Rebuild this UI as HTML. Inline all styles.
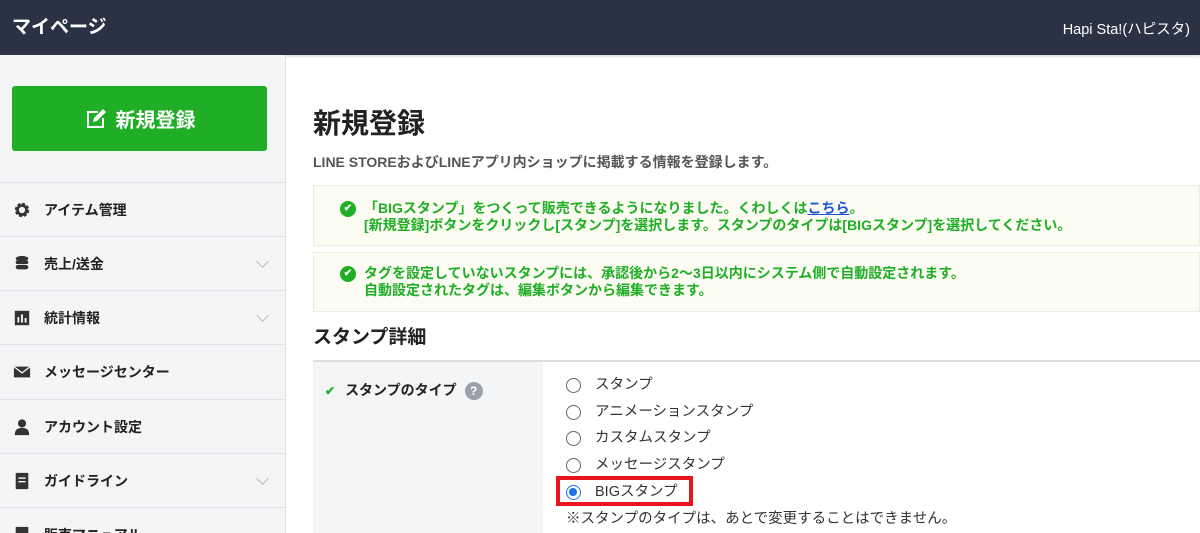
<!DOCTYPE html>
<html><head><meta charset="utf-8"><style>
*{margin:0;padding:0;box-sizing:border-box}
html,body{width:1200px;height:533px;overflow:hidden}
body{background:#fff;font-family:"Liberation Sans","Noto Sans CJK JP",sans-serif;color:#222;position:relative}
.hdr{position:absolute;left:0;top:0;width:1200px;height:55px;background:#2a3346;color:#fff;box-shadow:0 2px 2px rgba(0,0,0,.12)}
.hdr .t{position:absolute;left:12px;top:12px;font-size:19px;font-weight:bold}
.hdr .u{position:absolute;right:10px;top:18px;font-size:14.5px}
.side{position:absolute;left:0;top:55px;width:286px;height:478px;background:#f4f5f7;border-right:1px solid #dfe1e5;overflow:hidden}
.btn{position:absolute;left:12px;top:31px;width:255px;height:65px;background:#1fae26;border-radius:3px;color:#fff;font-size:20px;font-weight:bold;display:flex;align-items:center;justify-content:center;gap:8px}
.nav{position:absolute;left:0;width:285px;height:54px;border-top:1px solid #e1e3e7;font-size:14px;font-weight:bold;display:flex;align-items:center;padding-left:44px}
.nav .ic{position:absolute;left:12px;top:18px;width:20px;height:18px}
.nav .ch{position:absolute;right:18px;top:20px;width:9px;height:9px;border-right:1.5px solid #bbb;border-bottom:1.5px solid #bbb;transform:rotate(45deg)}
h1{position:absolute;left:313px;top:102px;font-size:28px;font-weight:bold;white-space:nowrap}
.sub{position:absolute;left:313px;top:152px;font-size:14px;font-weight:bold;color:#555;white-space:nowrap}
.box{position:absolute;left:313px;width:887px;background:#fcfcf3;border:1px solid #ecece0;color:#1fae26;font-size:14px;font-weight:bold;line-height:17px;padding-left:50px;white-space:nowrap;overflow:hidden}
.box .ck{position:absolute;left:26px;width:16px;height:16px;border-radius:50%;background:#1fae26;color:#fff;font-size:10px;text-align:center;line-height:16px}
.box a{color:#1a55d6;text-decoration:underline}
h2{position:absolute;left:313px;top:322px;font-size:19px;font-weight:bold;white-space:nowrap}
.tbl{position:absolute;left:313px;top:360px;width:887px;height:173px;border-top:2px solid #ddd}
.lc{position:absolute;left:0;top:0;width:230px;height:171px;background:#f4f5f7}
.lab{position:absolute;left:12px;top:18px;font-size:14px;font-weight:bold;white-space:nowrap}
.q{display:inline-block;width:18px;height:18px;border-radius:50%;background:#9aa1ac;color:#fff;font-size:12px;text-align:center;line-height:18px;margin-left:8px;vertical-align:middle}
.r{position:absolute;left:566px;font-size:14.5px;line-height:20px;color:#333;white-space:nowrap;display:flex;align-items:center}
.r i{display:inline-block;width:15px;height:15px;border:1px solid #666;border-radius:50%;margin-right:14px;position:relative}
.r i.on{border:1.5px solid #1a73e8}
.r i.on:after{content:"";position:absolute;left:2px;top:2px;width:8px;height:8px;border-radius:50%;background:#1a73e8}
.red{position:absolute;left:556px;top:476px;width:137px;height:30px;border:4px solid #e8141b}
</style></head><body>
<div class="hdr"><div class="t">マイページ</div><div class="u">Hapi Sta!(ハピスタ)</div></div>
<div class="side">
<div class="btn"><svg width="24" height="24" viewBox="0 0 24 24"><path d="M3 4h11v2H5v13h13v-8h2v10H3z" fill="#fff"/><path d="M9 15l1-4 9-9 3 3-9 9z" fill="#fff"/></svg>新規登録</div>
<div class="nav" style="top:127px"><svg class="ic" viewBox="0 0 20 20"><circle cx="10" cy="10" r="6" fill="none" stroke="#333" stroke-width="4" stroke-dasharray="3 1.7"/><circle cx="10" cy="10" r="5" fill="none" stroke="#333" stroke-width="3"/></svg>アイテム管理</div>
<div class="nav" style="top:181px"><svg class="ic" viewBox="0 0 20 20"><ellipse cx="10" cy="4" rx="7" ry="3" fill="#333"/><rect x="3" y="6" width="14" height="4" rx="2" fill="#333"/><rect x="3" y="11" width="14" height="5" rx="3" fill="#333"/></svg>売上/送金<span class="ch"></span></div>
<div class="nav" style="top:235px"><svg class="ic" viewBox="0 0 20 20"><rect x="2" y="2" width="16" height="16" fill="#333"/><rect x="5" y="9" width="2" height="6" fill="#fff"/><rect x="9" y="6" width="2" height="9" fill="#fff"/><rect x="13" y="10" width="2" height="5" fill="#fff"/></svg>統計情報<span class="ch"></span></div>
<div class="nav" style="top:289px"><svg class="ic" viewBox="0 0 20 20"><rect x="1" y="4" width="18" height="12" fill="#333"/><path d="M1 4l9 7 9-7" stroke="#f4f5f7" stroke-width="1.5" fill="none"/></svg>メッセージセンター</div>
<div class="nav" style="top:344px"><svg class="ic" viewBox="0 0 20 20"><circle cx="10" cy="6" r="4.5" fill="#333"/><path d="M2 19c0-6 3-8 8-8s8 2 8 8z" fill="#333"/></svg>アカウント設定</div>
<div class="nav" style="top:398px"><svg class="ic" viewBox="0 0 20 20"><rect x="3" y="1" width="14" height="18" rx="1" fill="#333"/><rect x="6" y="6" width="8" height="1.5" fill="#fff"/><rect x="6" y="10" width="8" height="1.5" fill="#fff"/></svg>ガイドライン<span class="ch"></span></div>
<div class="nav" style="top:452px;height:26px;overflow:hidden;align-items:flex-start;padding-top:19px;line-height:16px"><svg class="ic" viewBox="0 0 20 20"><rect x="3" y="1" width="14" height="18" fill="#333"/></svg>販売マニュアル</div>
</div>
<h1>新規登録</h1>
<div class="sub">LINE STOREおよびLINEアプリ内ショップに掲載する情報を登録します。</div>
<div class="box" style="top:185px;height:61px;padding-top:14px"><span class="ck" style="top:15px">✔</span>「BIGスタンプ」をつくって販売できるようになりました。くわしくは<a>こちら</a>。<br>[新規登録]ボタンをクリックし[スタンプ]を選択します。スタンプのタイプは[BIGスタンプ]を選択してください。</div>
<div class="box" style="top:252px;height:60px;padding-top:12px"><span class="ck" style="top:13px">✔</span>タグを設定していないスタンプには、承認後から2〜3日以内にシステム側で自動設定されます。<br>自動設定されたタグは、編集ボタンから編集できます。</div>
<h2>スタンプ詳細</h2>
<div class="tbl"><div class="lc"><div class="lab"><span style="color:#1fae26;font-size:12px;margin-right:10px">✔</span>スタンプのタイプ<span class="q">?</span></div></div></div>
<div class="r" style="top:375px"><i></i>スタンプ</div>
<div class="r" style="top:402px"><i></i>アニメーションスタンプ</div>
<div class="r" style="top:428px"><i></i>カスタムスタンプ</div>
<div class="r" style="top:455px"><i></i>メッセージスタンプ</div>
<div class="r" style="top:482px"><i class="on"></i>BIGスタンプ</div>
<div class="red"></div>
<div class="r" style="top:509px;left:566px">※スタンプのタイプは、あとで変更することはできません。</div>
</body></html>
